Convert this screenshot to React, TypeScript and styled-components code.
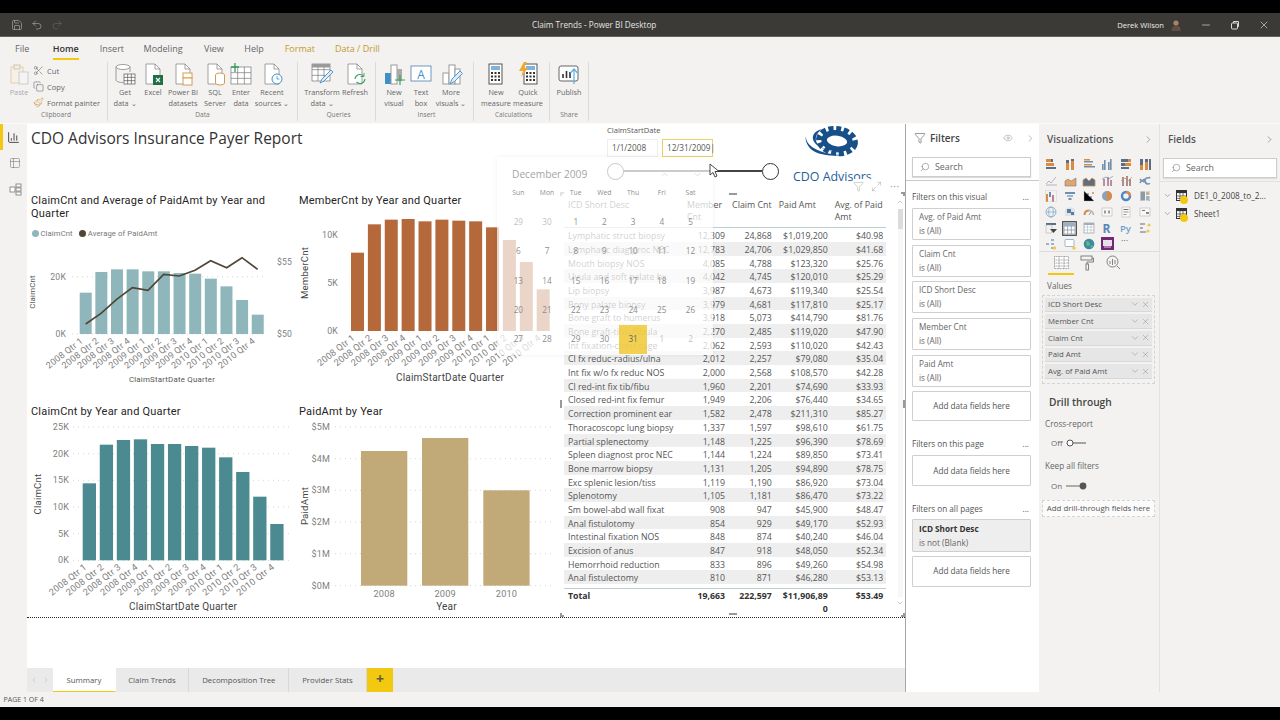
import React from 'react';
import styled, { createGlobalStyle } from 'styled-components';
import {
  BarChart3, ChevronDown, ChevronLeft, ChevronRight, ChevronUp, Copy, Eye, Filter, Maximize2, Minus,
  MoreHorizontal, Paintbrush, Redo2, Save, Scissors, Search, Table2, Undo2, X,
} from 'lucide-react';

const GlobalStyle = createGlobalStyle`
  html, body { margin: 0; padding: 0; background: #000; overflow: hidden; }
  * { box-sizing: border-box; }
`;

const UI = `"Open Sans", "Noto Sans", sans-serif`;
const DIN = `Roboto, "Liberation Sans", sans-serif`;

const Shell = styled.div`
  width: 1280px; height: 720px; background: #000; padding: 13px 0;
  display: flex; flex-direction: column; font-family: ${UI}; color: #444;
`;

/* title bar */
const TitleBar = styled.div`
  height: 24px; background: #3b3a36; border-bottom: 1px solid #62625e; color: #e4e4e4;
  display: flex; align-items: center; font-size: 8.2px;
`;
const QuickTools = styled.div`
  width: 532px; padding-left: 11px; display: flex; gap: 8px; align-items: center; color: #b5b5b3;
`;
const Who = styled.div`
  margin-left: auto; display: flex; align-items: center; color: #eee; font-size: 7.6px;
`;
const WinButtons = styled.div`
  width: 70px; margin-left: 18px; margin-right: 10px; display: flex; justify-content: space-between; color: #ddd;
`;

/* ribbon */
const MenuRow = styled.div`
  height: 23px; background: #f3f2f1; display: flex; padding-left: 15px; font-size: 9px; align-items: flex-start;
`;
const MenuTab = styled.div<{ $x: number; $active?: boolean; $ctx?: boolean }>`
  margin-left: ${p => p.$x}px; height: 23px; padding-top: 5px; line-height: 13px;
  color: ${p => (p.$ctx ? '#c49a2c' : p.$active ? '#333' : '#666')};
  border-bottom: 2px solid ${p => (p.$active ? '#f2c811' : 'transparent')};
  font-weight: ${p => (p.$active ? 600 : 400)};
`;
const Ribbon = styled.div`
  height: 64px; background: #f3f2f1; display: flex; padding: 2px 0; border-bottom: 1px solid #fafafa;
`;
const Group = styled.div<{ $w: number; $pad?: number }>`
  width: ${p => p.$w}px; padding-left: ${p => p.$pad ?? 0}px; flex: none;
  display: flex; flex-direction: column; border-right: 1px solid #dcdbda;
`;
const GroupBody = styled.div`
  flex: 1; display: flex;
`;
const GroupLabel = styled.div`
  height: 11px; line-height: 10px; text-align: center; font-size: 6.6px; color: #777;
`;
const Item = styled.div<{ $w: number; $off?: boolean }>`
  width: ${p => p.$w}px; flex: none; display: flex; flex-direction: column; align-items: center;
  font-size: 7.3px; line-height: 11px; white-space: nowrap; color: ${p => (p.$off ? '#aaa' : '#666')};
  svg { margin-bottom: 1px; display: block; }
`;
const SmallCol = styled.div`
  display: flex; flex-direction: column; gap: 5px; padding-top: 3px;
`;
const SmallItem = styled.div`
  display: flex; align-items: center; gap: 3px; height: 11px; font-size: 7.6px; color: #666; white-space: nowrap;
  svg { flex: none; }
`;

/* main */
const Main = styled.div`
  flex: 1; min-height: 0; display: flex;
`;
const Rail = styled.div`
  width: 27px; flex: none; background: #f3f2f1; display: flex; flex-direction: column; align-items: center; color: #666;
`;
const RailItem = styled.div<{ $on?: boolean }>`
  width: 27px; height: 26px; display: flex; align-items: center; justify-content: center;
  color: ${p => (p.$on ? '#333' : '#777')};
  border-left: 3px solid ${p => (p.$on ? '#f2c811' : 'transparent')};
  padding-right: ${p => (p.$on ? 3 : 0)}px;
`;
const Center = styled.div`
  width: 878px; flex: none; display: flex; flex-direction: column;
`;
const Canvas = styled.div`
  position: relative; height: 544px; background: #fff;
  display: grid; grid-template-columns: 270px 263px 345px; grid-template-rows: 66px 210px 217px 51px;
`;
const ReportTitle = styled.div`
  grid-column: 1 / 3; padding: 4px 0 0 4px; font-size: 15.5px; line-height: 21px; color: #333;
`;
const TopRight = styled.div`
  display: flex; padding-left: 47px; overflow: hidden;
`;
const Slicer = styled.div`
  width: 172px; flex: none; display: flex; flex-direction: column;
`;
const SlicerTitle = styled.div`
  font-size: 7.6px; line-height: 12px; margin-bottom: 3px; color: #555;
`;
const DateRow = styled.div`
  display: flex; gap: 4px;
`;
const DateBox = styled.div<{ $on?: boolean }>`
  width: 51px; height: 18px; line-height: 16px; padding-left: 4px; font-size: 8.2px; color: #555; background: #fff;
  border: 1px solid ${p => (p.$on ? '#ecd165' : '#eee')};
`;
const Slider = styled.div`
  margin-top: 5px; height: 18px; display: flex; align-items: center;
`;
const Handle = styled.div`
  width: 17px; height: 17px; flex: none; border-radius: 50%; background: #fff; border: 1.6px solid #333;
`;
const Track = styled.div`
  flex: 1; height: 2px; background: #444;
`;
const Logo = styled.div`
  margin-left: 14px; width: 80px; display: flex; flex-direction: column;
`;
const LogoText = styled.div`
  font-size: 12.4px; line-height: 12px; color: #1f5f99; white-space: nowrap; margin-top: -2px;
`;
const Visual = styled.div`
  min-width: 0; position: relative;
`;
const VisualTitle = styled.div<{ $h: number; $pt: number; $pl: number }>`
  height: ${p => p.$h}px; padding: ${p => p.$pt}px 0 0 ${p => p.$pl}px; font-family: ${DIN}; font-size: 11px; line-height: 13.5px;
  letter-spacing: 0.2px; color: #252423; white-space: nowrap;
`;
const ChartSvg = styled.svg`
  display: block; overflow: visible; font-family: ${DIN};
`;
const Tick = styled.text<{ $s?: number; $c?: string }>`
  font-size: ${p => p.$s ?? 9}px; fill: ${p => p.$c ?? '#808080'}; letter-spacing: .2px;
`;
const LegendRow = styled.div`
  height: 19px; padding: 8px 0 0 4px; display: flex; align-items: center; gap: 1.5px; font-family: ${DIN}; font-size: 7.7px; line-height: 11px; color: #777; letter-spacing: .1px;
`;
const Dot = styled.span<{ $c: string; $ml: number }>`
  width: 7px; height: 7px; border-radius: 50%; background: ${p => p.$c}; margin-left: ${p => p.$ml}px;
`;

/* table */
const TableCell = styled.div`
  grid-column: 3; grid-row: 2 / 4; position: relative; padding: 8.7px 0 0 4px; display: flex;
`;
const TableBody = styled.div`
  width: 322px; flex: none; display: flex; flex-direction: column; font-size: 8.75px; color: #555;
`;
const Cols = `grid-template-columns: 123px 38px 46.7px 56px 55.6px 2.7px;`;
const HeadRow = styled.div`
  display: grid; ${Cols} height: 29.5px; padding-top: .4px; border-bottom: 1.5px solid #bdcfd0; line-height: 12px; font-size: 8.85px;
`;
const HeadCell = styled.div<{ $pl?: number; $right?: boolean }>`
  padding-left: ${p => p.$pl ?? 0}px; text-align: ${p => (p.$right ? 'right' : 'left')}; white-space: nowrap;
`;
const DataRow = styled.div<{ $alt: boolean }>`
  display: grid; ${Cols} height: 13.69px; line-height: 16px; background: ${p => (p.$alt ? '#eeeeee' : '#fff')};
`;
const NameCell = styled.div`
  padding-left: 4px; white-space: nowrap;
`;
const Num = styled.div`
  text-align: right; white-space: nowrap;
`;
const TotalRow = styled.div`
  margin-top: 3.5px; border-top: 1px solid #bdcfd0; display: grid; ${Cols} line-height: 13px; padding-top: 1px;
  font-weight: 700; color: #333;
`;
const ScrollCol = styled.div`
  width: 8px; margin: -1px 0 10px 10px; display: flex; flex-direction: column; align-items: center; color: #777;
`;
const Thumb = styled.div`
  width: 5px; height: 20px; margin-top: 3px; background: #dcdcdc;
`;
const ScrollRest = styled.div`
  flex: 1; width: 5px; background: #f7f7f7; margin-bottom: 2px;
`;
const VisualIcons = styled.div`
  position: absolute; right: 2px; top: -11px; display: flex; gap: 7px; width: 50px; height: 14px; align-items: center;
  color: #999; background: #fff;
`;
const Grip = styled.span<{ $l?: number; $r?: number; $t?: number; $b?: number; $w: number; $h: number }>`
  position: absolute; background: #999;
  ${p => (p.$l !== undefined ? `left:${p.$l}px;` : '')} ${p => (p.$r !== undefined ? `right:${p.$r}px;` : '')}
  ${p => (p.$t !== undefined ? `top:${p.$t}px;` : '')} ${p => (p.$b !== undefined ? `bottom:${p.$b}px;` : '')}
  width: ${p => p.$w}px; height: ${p => p.$h}px;
`;
const BottomLine = styled.div`
  grid-column: 1 / 4; border-top: 1px dotted #222;
`;

/* calendar flyout */
const Calendar = styled.div`
  position: absolute; left: 470px; top: 33px; width: 216px; height: 198px; z-index: 5;
  background: rgba(255, 255, 255, 0.72); box-shadow: 0 0 5px rgba(0, 0, 0, 0.06);
  padding: 10px 7px 0 7px; color: #999;
`;
const CalHead = styled.div`
  display: flex; align-items: center; height: 14px; padding-left: 8px; font-size: 10.2px; color: #a5a5a5;
`;
const CalNav = styled.div`
  margin-left: auto; width: 44px; margin-right: 3px; display: flex; justify-content: space-between; color: #bbb;
`;
const CalGrid = styled.div`
  display: grid; grid-template-columns: repeat(7, 28.7px); margin-top: 7px; text-align: center;
`;
const CalDow = styled.div`
  font-size: 6.8px; height: 20px; line-height: 10px; color: #8f8f8f;
`;
const CalDay = styled.div<{ $dim?: boolean; $sel?: boolean }>`
  height: 29.3px; line-height: 28px; font-size: 8.2px;
  color: ${p => (p.$dim ? '#c2c2c2' : p.$sel ? '#666' : '#8d8d8d')};
  background: ${p => (p.$sel ? 'rgba(240, 200, 50, 0.85)' : 'transparent')};
`;
const Pointer = styled.svg`
  position: absolute; left: 682px; top: 39px; z-index: 6;
`;

/* page tabs */
const TabBar = styled.div`
  height: 24px; display: flex; background: #eaeaea;
`;
const TabNav = styled.div`
  width: 26.3px; display: flex; align-items: center; justify-content: space-around; color: #bbb; padding: 0 1px;
`;
const PageTab = styled.div<{ $w: number; $on?: boolean }>`
  width: ${p => p.$w}px; text-align: center; font-size: 7.8px; line-height: 24px; color: #555;
  background: ${p => (p.$on ? '#fff' : 'transparent')};
  border-right: 1px solid ${p => (p.$on ? 'transparent' : '#d8d8d8')};
  border-bottom: 1.5px solid ${p => (p.$on ? '#f2c811' : 'transparent')};
`;
const AddTab = styled.div`
  width: 26.6px; background: #f2c811; color: #5c5c3c; text-align: center; font-size: 14px; font-weight: 700; line-height: 22px;
`;
const StatusBar = styled.div`
  height: 15px; background: #f3f2f1; font-size: 7px; line-height: 16px; padding-left: 3.5px; color: #555;
`;

/* panes */
const FiltersPane = styled.div`
  width: 134px; flex: none; background: #fff; border-left: 1px solid #a8a8a8; display: flex; flex-direction: column; padding: 0 8px 0 6px;
`;
const FilterHead = styled.div`
  height: 28px; display: flex; align-items: center; font-size: 10px; font-weight: 600; color: #444; gap: 4px; padding-left: 2px;
`;
const HeadEnd = styled.div`
  margin-left: auto; display: flex; align-items: center; gap: 12px; margin-right: -5px; color: #888;
`;
const SearchBox = styled.div<{ $w: number }>`
  width: ${p => p.$w}px; height: 20px; margin-top: 5px; background: #fff; border: 1px solid #ccc; box-shadow: 0 1px 1px #ddd;
  display: flex; align-items: center; gap: 5px; padding-left: 7px; font-size: 8.8px; color: #666;
`;
const PaneLine = styled.div`
  height: 1px; background: #c9c9c9; margin: 3px -8px 0 -6px;
`;
const SectionHead = styled.div<{ $mt: number }>`
  display: flex; justify-content: space-between; height: 12px; line-height: 12px; margin-top: ${p => p.$mt}px;
  font-size: 8.2px; color: #555; padding-right: 2px;
`;
const FilterCard = styled.div<{ $fill?: boolean; $h?: number; $mt?: number }>`
  height: ${p => p.$h ?? 32}px; margin-top: ${p => p.$mt ?? 4.7}px; border: 1px solid #cfcfcf; border-radius: 1px;
  background: ${p => (p.$fill ? '#eeeeee' : '#fff')}; padding-left: 6px; font-size: 8.2px; line-height: 14px; color: #666;
  display: flex; flex-direction: column; justify-content: center;
  b { color: #333; font-weight: 700; }
`;
const AddCard = styled(FilterCard)`
  align-items: center; padding-left: 0; color: #555;
`;
const VizPane = styled.div`
  width: 120px; flex: none; background: #f3f2f1; display: flex; flex-direction: column;
`;
const PaneHead = styled.div<{ $pl: number }>`
  height: 29px; display: flex; align-items: center; justify-content: space-between; padding: 1px 5px 0 ${p => p.$pl}px;
  font-size: 10px; font-weight: 600; color: #555;
  svg { color: #666; }
`;
const VizGrid = styled.div`
  margin-top: 3px; padding: 0 3px; height: 96px; display: grid; grid-template-columns: repeat(6, 18.67px); grid-auto-rows: 16px;
  justify-items: center; align-items: center; border-bottom: 1px solid #dcdcdc;
`;
const VizTabs = styled.div`
  height: 24px; padding-left: 9px; display: flex;
`;
const VizTab = styled.div<{ $on?: boolean }>`
  width: 26px; height: 23px; display: flex; align-items: center; justify-content: center;
  border-bottom: 2px solid ${p => (p.$on ? '#f2c811' : 'transparent')};
`;
const FieldLabel = styled.div<{ $mt?: number; $pl?: number }>`
  margin-top: ${p => p.$mt ?? 4}px; padding-left: ${p => p.$pl ?? 6}px; font-size: 8.2px; line-height: 12px; color: #666;
`;
const WellBox = styled.div`
  margin: 3px 4px 0 3px; height: 89px; border: 1px dashed #d4d4d4; padding: 1.5px 2px; display: flex; flex-direction: column; gap: 2px;
`;
const Pill = styled.div`
  height: 14.7px; background: #e6e6e6; border-bottom: 1px solid #d8d8d8; padding: 0 2px 0 3px; display: flex; align-items: center; font-size: 7.8px; color: #555;
  span { flex: 1; }
  svg { color: #777; margin-left: 1px; }
`;
const DrillTitle = styled.div`
  margin-top: 12px; padding-left: 10px; font-size: 10.2px; font-weight: 600; line-height: 13px; color: #444;
`;
const ToggleRow = styled.div<{ $mt?: number }>`
  display: flex; align-items: center; margin-top: ${p => p.$mt ?? 7}px; padding-left: 12px; font-size: 8px; line-height: 12px; color: #666; gap: 3px;
`;
const DrillBox = styled.div`
  margin: 8px 4px 0 3px; height: 17px; border: 1px dashed #d4d4d4; background: #fbfbfb; text-align: center;
  font-size: 7.9px; line-height: 15px; color: #555; white-space: nowrap;
`;
const FieldsPane = styled.div`
  flex: 1; min-width: 0; background: #f3f2f1; border-left: 1px solid #e2e2e2; display: flex; flex-direction: column;
`;
const FieldsTop = styled.div`
  padding: 0 3px 3px 3px; border-bottom: 1px solid #e0e0e0;
`;
const TreeRow = styled.div<{ $mt: number }>`
  display: flex; align-items: center; margin-top: ${p => p.$mt}px; padding-left: 3px; height: 12px; font-size: 8.2px; color: #444; white-space: nowrap;
  position: relative;
`;
const Badge = styled.span`
  position: absolute; left: 20px; top: 7px; width: 8px; height: 8px; border-radius: 50%; background: #f2c811; z-index: 1;
`;

/* ---- small drawings ---- */
const Page: React.FC<{ children?: React.ReactNode }> = ({ children }) => (
  <svg width="24" height="24" viewBox="0 0 24 24" fill="none">
    <path d="M5 2h9l5 5v15H5z" fill="#fff" stroke="#8a8a8a" strokeWidth=".8" />
    <path d="M14 2v5h5" stroke="#8a8a8a" strokeWidth=".8" />
    {children}
  </svg>
);
const Ic: React.FC<{ children?: React.ReactNode }> = ({ children }) => (
  <svg width="24" height="24" viewBox="0 0 24 24" fill="none">{children}</svg>
);
const GridLines = ({ x, y, w, h, c = '#777' }: { x: number; y: number; w: number; h: number; c?: string }) => (
  <g stroke={c} strokeWidth=".7">
    <rect x={x} y={y} width={w} height={h} fill="#fff" />
    <path d={`M${x} ${y + h / 3}h${w}M${x} ${y + (2 * h) / 3}h${w}M${x + w / 3} ${y}v${h}M${x + (2 * w) / 3} ${y}v${h}`} />
  </g>
);
const Calc = ({ x }: { x: number }) => (
  <g>
    <rect x={x} y="2" width="13" height="20" fill="#fff" stroke="#444" strokeWidth=".9" />
    <rect x={x + 2} y="4" width="9" height="4" fill="#7fb3dd" />
    {[10, 13.5, 17].map(y => [2, 5.5, 9].map(dx => <rect key={`${y}${dx}`} x={x + dx} y={y} width="2" height="2" fill="#333" />))}
  </g>
);
const R = (x: number, y: number, w: number, h: number, c: string) => <rect x={x} y={y} width={w} height={h} fill={c} />;
const B = '#6f8fae';
const O = '#d98b43';
const D = '#5a6f86';
const bars = (xs: number[], tops: number[], w: number, c: string) => xs.map((x, i) => <rect key={i} x={x} y={tops[i]} width={w} height={12 - tops[i]} fill={c} />);
const vizIcons: React.ReactNode[] = [
  <>{R(1, 1, 5, 3, O)}{R(6, 1, 2, 3, D)}{R(1, 5, 8, 3, O)}{R(1, 9, 10, 2, D)}</>,
  <>{R(2, 5, 3, 7, O)}{R(2, 2, 3, 3, D)}{R(7, 3, 3, 9, O)}{R(7, 1, 3, 2, D)}</>,
  <>{R(1, 1, 6, 1.5, O)}{R(1, 3, 9, 1.5, B)}{R(1, 6, 8, 1.5, O)}{R(1, 8, 11, 1.5, B)}</>,
  <>{bars([1, 3, 7, 9], [6, 2, 4, 1], 1.6, B)}</>,
  <>{R(1, 1, 7, 3, D)}{R(8, 1, 3, 3, O)}{R(1, 5, 4, 3, D)}{R(5, 5, 6, 3, O)}{R(1, 9, 8, 2, D)}</>,
  <>{R(1, 1, 3, 6, D)}{R(1, 7, 3, 5, O)}{R(6, 1, 3, 3, D)}{R(6, 4, 3, 8, O)}{R(10, 1, 2, 11, D)}</>,
  <path d="M1 10l3-3 2 2 5-6M1 11h11" stroke="#9aa5b1" strokeWidth=".8" fill="none" />,
  <path d="M1 12V7l3-2 3 2 5-3v8z" fill="#e2a56c" stroke={D} strokeWidth=".5" />,
  <path d="M0 12V6l3-2 3 3 3-3 3 2v6z" fill={D} stroke={O} strokeWidth=".8" />,
  <>{bars([2, 6, 9], [5, 3, 6], 2, '#b98fa0')}<path d="M1 5l4-2 3 2 4-3" stroke={B} strokeWidth=".7" fill="none" /></>,
  <>{bars([2, 6, 9], [3, 2, 5], 2, '#a88f8f')}<path d="M1 7l4-3 3 3 4-4" stroke={O} strokeWidth=".7" fill="none" /></>,
  <path d="M1 9c3-6 3 2 5-3s3 0 5-3M1 5c3 5 4-3 5 2s4 2 5 3" stroke={B} strokeWidth="1.5" fill="none" />,
  <>{R(1, 4, 2, 8, O)}{R(4, 2, 2, 5, B)}{R(7, 5, 2, 7, '#c07ea0')}<rect x=".5" y=".5" width="11" height="11" stroke="#ccc" strokeWidth=".4" fill="none" /></>,
  <>{R(1, 2, 10, 2, B)}{R(3, 5, 6, 2, '#9fb4ca')}{R(4.5, 8, 3, 2, B)}</>,
  <><circle cx="3" cy="9" r="1" fill={O} /><circle cx="5" cy="4" r="1" fill={B} /><circle cx="8" cy="7" r="1" fill={B} /><circle cx="10" cy="3" r="1" fill={O} /><path d="M1 1v10h10" stroke="#bbb" strokeWidth=".4" /></>,
  <><circle cx="6" cy="6" r="5" fill="#8aa2bb" /><path d="M6 6V1a5 5 0 0 1 0 10z" fill={O} /></>,
  <><circle cx="6" cy="6" r="4" fill="none" stroke="#4c86c6" strokeWidth="2.4" /><path d="M6 2a4 4 0 0 1 4 4" stroke={O} strokeWidth="2.4" fill="none" /></>,
  <>{R(1, 1, 5, 10, '#8d9aa8')}{R(7, 1, 4, 4, '#c9b38f')}{R(7, 6, 4, 5, '#9fb0c0')}<rect x="1.5" y="1.5" width="9" height="9" fill="none" stroke="#fff" strokeWidth=".4" /></>,
  <><circle cx="6" cy="6" r="5" fill="#eaf2f7" stroke="#7b98b3" strokeWidth=".7" /><ellipse cx="6" cy="6" rx="2.3" ry="5" fill="none" stroke="#7b98b3" strokeWidth=".6" /><path d="M1 6h10" stroke="#7b98b3" strokeWidth=".6" /></>,
  <><path d="M1 3l5-2 5 2v7H1z" fill="#dde5ec" /><path d="M3 3h4v4H3zM7 6h3v3H7z" fill="#5f7c99" /></>,
  <><path d="M1.5 9a4.5 4.5 0 0 1 9 0" stroke="#b9b9b9" strokeWidth="1.8" fill="none" /><path d="M1.5 9a4.5 4.5 0 0 1 4-4.5" stroke={O} strokeWidth="1.8" fill="none" /><path d="M6 9l2-3" stroke="#555" strokeWidth=".6" /></>,
  <><rect x="1" y="2" width="10" height="8" fill="#f8f8f8" stroke="#aaa" strokeWidth=".5" />{R(3, 4.5, 2, 3, '#999')}{R(7, 4.5, 2, 3, '#999')}</>,
  <><rect x="2" y="1" width="8" height="10" fill="#f8f8f8" stroke="#aaa" strokeWidth=".5" />{R(3.5, 3, 5, 1, '#777')}{R(3.5, 5.5, 5, 1, '#999')}{R(3.5, 8, 3, 1, '#999')}</>,
  <><rect x="1" y="2" width="10" height="8" fill="#f8f8f8" stroke="#aaa" strokeWidth=".5" />{R(3, 4, 3, 1, '#777')}{R(7, 6, 3, 2, '#888')}</>,
  <><path d="M1 1h10v2H1z" fill={D} /><path d="M1 3h6v8H1z" fill="none" stroke="#9aa" strokeWidth=".5" /><path d="M5 7h7l-3.5 4z" fill="#444" /></>,
  null,
  <><rect x="1" y="1" width="10" height="10" fill="#fff" stroke="#777" strokeWidth=".5" />{R(1, 1, 10, 2, '#9bb0c3')}<path d="M4.5 1v10M8 1v10M1 5h10M1 8h10" stroke="#9bb0c3" strokeWidth=".5" /></>,
  <text x="1.5" y="11" fontSize="12" fontWeight="700" fill="#5b86b5" fontFamily="Open Sans, sans-serif">R</text>,
  <text x="0" y="10" fontSize="9.5" fontWeight="600" fill="#6d9fd0" fontFamily="Open Sans, sans-serif">Py</text>,
  <><path d="M1 2h5M1 6h3M1 10h6" stroke="#667" strokeWidth="1.2" /><circle cx="10" cy="3" r="1.6" fill="#f0c850" /><circle cx="9" cy="9" r="1.6" fill="#f0c850" /></>,
  <><path d="M1 6h3M6 2h3M6 6h3M6 10h3" stroke="#4477aa" strokeWidth="1.2" /><circle cx="9.5" cy="10" r="1.8" fill="#f0c850" /></>,
  <><rect x="1" y="1.5" width="9" height="7" rx="1" fill="#fff" stroke="#7f9ab5" strokeWidth=".7" /><circle cx="10" cy="10" r="1.7" fill="#f0c850" /></>,
  <><circle cx="6" cy="6" r="5.3" fill="#3d8aa8" /><path d="M3 3l3 1 1 3-3 1zM7 8l3-1-1 3z" fill="#6dbb6d" /></>,
  <><rect x="0" y="-1" width="13" height="13" fill="#742774" /><rect x="2" y="2" width="9" height="6" fill="#fff" opacity=".85" /><path d="M3 9h7" stroke="#fff" strokeWidth=".8" /></>,
  <text x="1" y="6" fontSize="9" fill="#666" fontFamily="Open Sans, sans-serif">···</text>,
];

const quarters = ['2008 Qtr 1', '2008 Qtr 2', '2008 Qtr 3', '2008 Qtr 4', '2009 Qtr 1', '2009 Qtr 2', '2009 Qtr 3', '2009 Qtr 4', '2010 Qtr 1', '2010 Qtr 2', '2010 Qtr 3', '2010 Qtr 4'];

type ChartProps = {
  vx: number; vy: number; vw: number; vh: number;
  base: number; barX: number; step: number; barW: number; tops: number[]; color: string;
  ticks: [string, number][]; tickX: number; gridFrom: number; gridTo: number; tickSize?: number;
  axisY: [string, number, number, number]; axisX: [string, number, number, number]; labelSize?: number; axisColor?: string;
  children?: React.ReactNode;
};

const QuarterChart: React.FC<ChartProps> = ({ vx, vy, vw, vh, base, barX, step, barW, tops, color, ticks, tickX, gridFrom, gridTo, tickSize = 9, axisY, axisX, labelSize = 9.4, axisColor = '#444', children }) => (
  <ChartSvg width={vw} height={vh} viewBox={`${vx} ${vy} ${vw} ${vh}`}>
    {ticks.map(([t, y]) => (
      <g key={t}>
        <line x1={gridFrom} x2={gridTo} y1={y} y2={y} stroke="#d5d5d5" strokeDasharray="1 4" />
        <Tick x={tickX} y={y + 3} textAnchor="end" $s={tickSize}>{t}</Tick>
      </g>
    ))}
    {tops.map((top, i) => <rect key={i} x={barX + i * step} y={top} width={barW} height={base - top} fill={color} />)}
    {quarters.map((q, i) => {
      const x = barX + i * step + barW / 2 - 2;
      const y = base + 8;
      return <Tick key={q} x={x} y={y} textAnchor="end" $s={labelSize} transform={`rotate(-38 ${x} ${y})`}>{q}</Tick>;
    })}
    <Tick x={axisY[1]} y={axisY[2]} $s={axisY[3]} $c={axisColor} textAnchor="middle" transform={`rotate(-90 ${axisY[1]} ${axisY[2]})`}>{axisY[0]}</Tick>
    <Tick x={axisX[1]} y={axisX[2]} $s={axisX[3]} $c={axisColor} textAnchor="middle">{axisX[0]}</Tick>
    {children}
  </ChartSvg>
);

const rowsData: [string, string, string, string, string][] = [
  ['Lymphatic struct biopsy', '12,309', '24,868', '1,019,200', '40.98'],
  ['Lymphatic diag proc NEC', '12,783', '24,706', '1,029,850', '41.68'],
  ['Mouth biopsy NOS', '4,085', '4,788', '123,320', '25.76'],
  ['Uvula and soft palate bx', '4,042', '4,745', '120,010', '25.29'],
  ['Lip biopsy', '3,987', '4,673', '119,340', '25.54'],
  ['Bony palate biopsy', '3,979', '4,681', '117,810', '25.17'],
  ['Bone graft to humerus', '3,918', '5,073', '414,790', '81.76'],
  ['Bone graft-tibia/fibula', '2,270', '2,485', '119,020', '47.90'],
  ['Int fixation-chest cage', '2,062', '2,593', '110,020', '42.43'],
  ['Cl fx reduc-radius/ulna', '2,012', '2,257', '79,080', '35.04'],
  ['Int fix w/o fx reduc NOS', '2,000', '2,568', '108,570', '42.28'],
  ['Cl red-int fix tib/fibu', '1,960', '2,201', '74,690', '33.93'],
  ['Closed red-int fix femur', '1,949', '2,206', '76,440', '34.65'],
  ['Correction prominent ear', '1,582', '2,478', '211,310', '85.27'],
  ['Thoracoscopc lung biopsy', '1,337', '1,597', '98,610', '61.75'],
  ['Partial splenectomy', '1,148', '1,225', '96,390', '78.69'],
  ['Spleen diagnost proc NEC', '1,144', '1,224', '89,850', '73.41'],
  ['Bone marrow biopsy', '1,131', '1,205', '94,890', '78.75'],
  ['Exc splenic lesion/tiss', '1,119', '1,190', '86,920', '73.04'],
  ['Splenotomy', '1,105', '1,181', '86,470', '73.22'],
  ['Sm bowel-abd wall fixat', '908', '947', '45,900', '48.47'],
  ['Anal fistulotomy', '854', '929', '49,170', '52.93'],
  ['Intestinal fixation NOS', '848', '874', '40,240', '46.04'],
  ['Excision of anus', '847', '918', '48,050', '52.34'],
  ['Hemorrhoid reduction', '833', '896', '49,260', '54.98'],
  ['Anal fistulectomy', '810', '871', '46,280', '53.13'],
];

const calDays = [29, 30, 1, 2, 3, 4, 5, 6, 7, 8, 9, 10, 11, 12, 13, 14, 15, 16, 17, 18, 19, 20, 21, 22, 23, 24, 25, 26, 27, 28, 29, 30, 31, 1, 2];
const linePts = [[257, 432], [303, 400], [350, 358], [397, 323], [444, 331], [491, 283], [538, 288], [585, 271], [632, 242], [680, 263], [726, 233], [773, 268]];
const z1 = (t: number) => 180 + t / 3;
const z2 = (t: number) => 190 + t / 3;
const z3 = (t: number) => 400 + t / 3;

const filterCards = ['Avg. of Paid Amt', 'Claim Cnt', 'ICD Short Desc', 'Member Cnt', 'Paid Amt'];
const wells = ['ICD Short Desc', 'Member Cnt', 'Claim Cnt', 'Paid Amt', 'Avg. of Paid Amt'];

const TableGlyph = () => (
  <svg width="11" height="11" viewBox="0 0 11 11"><rect x=".5" y=".5" width="10" height="10" fill="#fff" stroke="#333" /><rect x=".5" y=".5" width="10" height="2.6" fill="#333" /><path d="M.5 6h10M.5 8.4h10M4 3v8M7 3v8" stroke="#333" strokeWidth=".7" /></svg>
);

const App: React.FC = () => (
  <Shell>
    <GlobalStyle />
    <TitleBar>
      <QuickTools>
        <Save size={12} strokeWidth={1.2} />
        <Undo2 size={12} strokeWidth={1.2} />
        <Redo2 size={12} strokeWidth={1.2} color="#6b6b68" />
      </QuickTools>
      <div>Claim Trends - Power BI Desktop</div>
      <Who>
        Derek Wilson
        <svg width="12" height="12" viewBox="0 0 12 12" style={{ marginLeft: 6 }}>
          <circle cx="6" cy="4" r="2.6" fill="#a8836c" /><path d="M1.5 12c0-4 2-5 4.5-5s4.5 1 4.5 5z" fill="#5b4f48" /><path d="M8 7l2 2-1 2z" fill="#b14a2e" />
        </svg>
        <WinButtons>
          <Minus size={12} strokeWidth={1.3} />
          <svg width="12" height="12" viewBox="0 0 12 12" fill="none" stroke="currentColor"><rect x="2.5" y="4" width="6" height="6" rx="1" /><path d="M4.5 4V2.5h5v5H8.5" /></svg>
          <X size={12} strokeWidth={1.3} />
        </WinButtons>
      </Who>
    </TitleBar>

    <MenuRow>
      <MenuTab $x={0}>File</MenuTab>
      <MenuTab $x={23.5} $active>Home</MenuTab>
      <MenuTab $x={21}>Insert</MenuTab>
      <MenuTab $x={19.5}>Modeling</MenuTab>
      <MenuTab $x={21.5}>View</MenuTab>
      <MenuTab $x={20.5}>Help</MenuTab>
      <MenuTab $x={21} $ctx>Format</MenuTab>
      <MenuTab $x={20} $ctx>Data / Drill</MenuTab>
    </MenuRow>

    <Ribbon>
      <Group $w={108} $pad={5}>
        <GroupBody>
          <Item $w={28} $off>
            <svg width="24" height="24" viewBox="0 0 24 24" fill="none"><rect x="4" y="5" width="12" height="16" fill="#f6f0e6" stroke="#e3cfa9" /><rect x="7" y="3" width="6" height="4" fill="#eee" stroke="#d6c6a6" /><rect x="12" y="10" width="9" height="12" fill="#f4f4f4" stroke="#ccc" /></svg>
            Paste
          </Item>
          <SmallCol>
            <SmallItem><Scissors size={11} strokeWidth={1.1} color="#555" />Cut</SmallItem>
            <SmallItem><Copy size={11} strokeWidth={1.1} color="#555" />Copy</SmallItem>
            <SmallItem><Paintbrush size={11} strokeWidth={1.2} color="#c9892f" />Format painter</SmallItem>
          </SmallCol>
        </GroupBody>
        <GroupLabel>Clipboard</GroupLabel>
      </Group>

      <Group $w={190}>
        <GroupBody>
          <Item $w={34}><Ic><ellipse cx="10" cy="5" rx="7" ry="2.5" fill="#fff" stroke="#888" strokeWidth=".8" /><path d="M3 5v13c0 1.4 3 2.5 7 2.5M17 5v5" stroke="#888" strokeWidth=".8" /><GridLines x={11} y={12} w={11} h={10} c="#555" /></Ic><span>Get</span><span>data ⌄</span></Item>
          <Item $w={22}><Page><rect x="12" y="13" width="10" height="10" fill="#1e7145" /><path d="M15 16l4 4M19 16l-4 4" stroke="#fff" strokeWidth="1.1" /></Page><span>Excel</span></Item>
          <Item $w={38}><Page><rect x="12" y="11" width="9" height="5" fill="#fff" stroke="#d69a4c" /><rect x="12" y="16" width="9" height="7" fill="#fff" stroke="#d69a4c" /></Page><span>Power BI</span><span>datasets</span></Item>
          <Item $w={26}><Page><ellipse cx="17" cy="13" rx="4.5" ry="2" fill="#fff" stroke="#d69a4c" /><path d="M12.5 13v8c0 1 2 2 4.5 2s4.5-1 4.5-2v-8" fill="#fff" stroke="#d69a4c" /></Page><span>SQL</span><span>Server</span></Item>
          <Item $w={26}><Ic><GridLines x={2} y={5} w={20} h={17} /><path d="M6 1v9M2 5h8" stroke="#2f9e5a" strokeWidth="1.3" /></Ic><span>Enter</span><span>data</span></Item>
          <Item $w={36}><Page><circle cx="17" cy="17" r="5" fill="#fff" stroke="#3f8fc9" /><path d="M17 14v3h2.5" stroke="#3f8fc9" strokeWidth=".8" /></Page><span>Recent</span><span>sources ⌄</span></Item>
        </GroupBody>
        <GroupLabel>Data</GroupLabel>
      </Group>

      <Group $w={78} $pad={4}>
        <GroupBody>
          <Item $w={40}><Ic><GridLines x={2} y={2} w={18} h={17} /><rect x="2" y="2" width="18" height="3.5" fill="#9a9a9a" /><path d="M10 21l2-4 9-9 2 2-9 9z" fill="#dcecf8" stroke="#3f8fc9" strokeWidth=".9" /></Ic><span>Transform</span><span>data ⌄</span></Item>
          <Item $w={26}><Page><path d="M12 17a5 5 0 0 1 8.5-3M22 17a5 5 0 0 1-8.5 3" stroke="#3aa35e" strokeWidth="1.1" /><path d="M21 11v3.5h-3.5" stroke="#3aa35e" strokeWidth=".9" /></Page><span>Refresh</span></Item>
        </GroupBody>
        <GroupLabel>Queries</GroupLabel>
      </Group>

      <Group $w={98} $pad={4}>
        <GroupBody>
          <Item $w={28}><Ic><rect x="3" y="11" width="6" height="11" fill="#3f8fc9" /><rect x="9" y="3" width="6" height="19" fill="#fff" stroke="#9a9a9a" /><rect x="15" y="7" width="5" height="12" fill="#aaa" /><path d="M18 13v10M13 18h10" stroke="#3aa35e" strokeWidth="1.2" /></Ic><span>New</span><span>visual</span></Item>
          <Item $w={26}><Ic><rect x="2" y="4" width="20" height="15" fill="#fff" stroke="#4f7fa8" strokeWidth=".8" /><text x="12" y="16.5" textAnchor="middle" fontSize="12" fill="#3f8fc9" fontFamily="Open Sans, sans-serif">A</text></Ic><span>Text</span><span>box</span></Item>
          <Item $w={34}><Ic><rect x="4" y="11" width="6" height="11" fill="#fff" stroke="#999" /><rect x="10" y="3" width="6" height="19" fill="#fff" stroke="#999" /><rect x="16" y="7" width="5" height="15" fill="#fff" stroke="#999" /><path d="M11 22l2-5 8-8 2.5 2.5-8 8z" fill="#dcecf8" stroke="#3f8fc9" strokeWidth=".9" /></Ic><span>More</span><span>visuals ⌄</span></Item>
        </GroupBody>
        <GroupLabel>Insert</GroupLabel>
      </Group>

      <Group $w={76} $pad={4}>
        <GroupBody>
          <Item $w={36}><Ic><Calc x={5} /></Ic><span>New</span><span>measure</span></Item>
          <Item $w={28}><Ic><Calc x={8} /><path d="M8 0L3 9h4l-2 6 7-9H8l3-6z" fill="#f0a830" /></Ic><span>Quick</span><span>measure</span></Item>
        </GroupBody>
        <GroupLabel>Calculations</GroupLabel>
      </Group>

      <Group $w={39}>
        <GroupBody>
          <Item $w={38}><Ic><rect x="2" y="4" width="19" height="15" rx="2" fill="#fff" stroke="#555" strokeWidth=".9" /><path d="M6 16v-4M9.5 16V9M13 16v-6" stroke="#333" strokeWidth="1.6" /><path d="M17 22V8M13.5 11L17 7l3.5 4" stroke="#5aaee0" strokeWidth="1.2" /></Ic><span>Publish</span></Item>
        </GroupBody>
        <GroupLabel>Share</GroupLabel>
      </Group>
    </Ribbon>

    <Main>
      <Rail>
        <RailItem $on><BarChart3 size={13} strokeWidth={1.6} /></RailItem>
        <RailItem><Table2 size={12} strokeWidth={1.1} /></RailItem>
        <RailItem>
          <svg width="13" height="13" viewBox="0 0 13 13" fill="#fff" stroke="#777" strokeWidth=".8"><rect x="1" y="4" width="5" height="5" /><rect x="7" y="1" width="5" height="3" /><rect x="7" y="5" width="5" height="3" /><rect x="7" y="9" width="5" height="3" /></svg>
        </RailItem>
      </Rail>

      <Center>
        <Canvas>
          <ReportTitle>CDO Advisors Insurance Payer Report</ReportTitle>
          <TopRight>
            <Slicer>
              <SlicerTitle>ClaimStartDate</SlicerTitle>
              <DateRow>
                <DateBox>1/1/2008</DateBox>
                <DateBox $on>12/31/2009|</DateBox>
              </DateRow>
              <Slider><Handle /><Track /><Handle /></Slider>
            </Slicer>
            <Logo>
              <svg width="80" height="49" viewBox="793 130 80 49" fill="none">
                <ellipse cx="837" cy="147" rx="18" ry="12" stroke="#174f88" strokeWidth="6" strokeDasharray="5 2.6" transform="rotate(8 837 147)" />
                <ellipse cx="837" cy="147" rx="13" ry="8" stroke="#174f88" strokeWidth="5.5" transform="rotate(8 837 147)" />
                <path d="M822 135C810 138 809 149 824 155c7 3 14 4 20 3-10 1-26-3-28-11-1-5 2-9 6-12z" fill="#174f88" />
                <path d="M806 142c-1 9 12 18 36 19-13 2-28-1-33-8-3-4-4-8-3-11z" fill="#174f88" />
              </svg>
              <LogoText>CDO Advisors</LogoText>
            </Logo>
          </TopRight>

          <Visual>
            <VisualTitle $h={30} $pt={3.5} $pl={4}>ClaimCnt and Average of PaidAmt by Year and<br />Quarter</VisualTitle>
            <LegendRow><Dot $c="#8fb7bb" $ml={1} />ClaimCnt<Dot $c="#4f4636" $ml={5} />Average of PaidAmt</LegendRow>
            <QuarterChart
              vx={27} vy={239} vw={270} vh={161}
              base={334} barX={79.7} step={15.64} barW={12}
              tops={[338, 276, 268, 268, 274, 274, 279, 281, 296, 319, 360, 404].map(z1)} color="#8fb7bb"
              ticks={[['20K', 276.7], ['0K', 334]]} tickX={66} gridFrom={72} gridTo={264} tickSize={8.6}
              axisY={['ClaimCnt', 35, 292, 7.8]} axisX={['ClaimStartDate Quarter', 172, 382, 7.9]} labelSize={9} axisColor="#555"
            >
              <polyline points={linePts.map(([x, y]) => `${x / 3},${z1(y)}`).join(' ')} fill="none" stroke="#4f4636" strokeWidth="1.7" />
              <Tick x={277} y={265} $s={8.6}>$55</Tick>
              <Tick x={277} y={337} $s={8.6}>$50</Tick>
            </QuarterChart>
          </Visual>

          <Visual>
            <VisualTitle $h={17} $pt={3.5} $pl={2}>MemberCnt by Year and Quarter</VisualTitle>
            <QuarterChart
              vx={297} vy={207} vw={263} vh={193}
              base={331} barX={351} step={16.88} barW={13}
              tops={[188, 103, 89, 87, 94, 89, 92, 94, 112, 150, 216, 298].map(z2)} color="#b5683a"
              ticks={[['10K', 235], ['5K', 283], ['0K', 331]]} tickX={338} gridFrom={343} gridTo={343} tickSize={8.8}
              axisY={['MemberCnt', 308, 273, 9.6]} axisX={['ClaimStartDate Quarter', 450, 381, 10]} labelSize={9.2}
            />
          </Visual>

          <TableCell>
            <VisualIcons>
              <Filter size={11} strokeWidth={1} />
              <Maximize2 size={11} strokeWidth={1} />
              <MoreHorizontal size={11} strokeWidth={1} />
            </VisualIcons>
            <Grip $l={0} $t={2} $w={4} $h={2} />
            <Grip $l={0} $t={2} $w={2} $h={4} />
            <Grip $r={0} $t={2} $w={4} $h={2} />
            <Grip $r={0} $t={2} $w={2} $h={4} />
            <Grip $l={169} $t={3} $w={8} $h={2} />
            <Grip $l={0} $b={0} $w={4} $h={2} />
            <Grip $r={0} $b={0} $w={4} $h={2} />
            <Grip $l={0} $b={0} $w={2} $h={4} />
            <Grip $r={0} $b={0} $w={2} $h={4} />
            <Grip $l={169} $b={2} $w={8} $h={2} />
            <Grip $l={0} $t={210} $w={2} $h={8} />
            <Grip $r={0} $t={210} $w={2} $h={8} />
            <TableBody>
              <HeadRow>
                <HeadCell $pl={4}>ICD Short Desc</HeadCell>
                <HeadCell>Member<br />Cnt</HeadCell>
                <HeadCell $right>Claim Cnt</HeadCell>
                <HeadCell $pl={7}>Paid Amt</HeadCell>
                <HeadCell $pl={7}>Avg. of Paid<br />Amt</HeadCell>
              </HeadRow>
              {rowsData.map((r, i) => (
                <DataRow key={r[0]} $alt={i % 2 === 1}>
                  <NameCell>{r[0]}</NameCell>
                  <Num>{r[1]}</Num>
                  <Num>{r[2]}</Num>
                  <Num>${r[3]}</Num>
                  <Num>${r[4]}</Num>
                </DataRow>
              ))}
              <TotalRow>
                <NameCell>Total</NameCell>
                <Num>19,663</Num>
                <Num>222,597</Num>
                <Num>$11,906,89<br />0</Num>
                <Num>$53.49</Num>
              </TotalRow>
            </TableBody>
            <ScrollCol>
              <ChevronUp size={8} strokeWidth={1.2} />
              <Thumb />
              <ScrollRest />
              <ChevronDown size={8} strokeWidth={1.2} />
            </ScrollCol>
          </TableCell>

          <Visual>
            <VisualTitle $h={18} $pt={4.5} $pl={4}>ClaimCnt by Year and Quarter</VisualTitle>
            <QuarterChart
              vx={27} vy={418} vw={270} vh={199}
              base={560.3} barX={82.7} step={17.05} barW={13.3}
              tops={[250, 134, 120, 118, 132, 132, 138, 143, 172, 216, 290, 372].map(z3)} color="#4b8a90"
              ticks={[['25K', 427], ['20K', 453.7], ['15K', 480.3], ['10K', 507], ['5K', 533.7], ['0K', 560.3]]} tickX={69} gridFrom={73} gridTo={290}
              axisY={['ClaimCnt', 41, 494, 9.6]} axisX={['ClaimStartDate Quarter', 183, 610, 10]} labelSize={9.2}
            />
          </Visual>

          <Visual>
            <VisualTitle $h={18} $pt={4.5} $pl={2}>PaidAmt by Year</VisualTitle>
            <ChartSvg width={263} height={199} viewBox="297 418 263 199">
              {([['$5M', 427], ['$4M', 458.7], ['$3M', 490.3], ['$2M', 522], ['$1M', 553.7], ['$0M', 585.7]] as [string, number][]).map(([t, y]) => (
                <g key={t}>
                  <line x1={335} x2={555} y1={y} y2={y} stroke="#d5d5d5" strokeDasharray="1 4" />
                  <Tick x={330} y={y + 3} textAnchor="end">{t}</Tick>
                </g>
              ))}
              {[[361, 451, '2008'], [422, 438, '2009'], [483.3, 490.3, '2010']].map(([x, t, l]) => (
                <g key={l as string}>
                  <rect x={x as number} y={t as number} width={46.3} height={585.7 - (t as number)} fill="#c2aa78" />
                  <Tick x={(x as number) + 23.2} y={597} textAnchor="middle" $s={9.2}>{l}</Tick>
                </g>
              ))}
              <Tick x={308} y={506} $s={9.6} $c="#444" textAnchor="middle" transform="rotate(-90 308 506)">PaidAmt</Tick>
              <Tick x={446.5} y={610} $s={10} $c="#444" textAnchor="middle">Year</Tick>
            </ChartSvg>
          </Visual>

          <BottomLine />

          <Calendar>
            <CalHead>
              December 2009
              <CalNav>
                <ChevronUp size={11} strokeWidth={1} />
                <ChevronDown size={11} strokeWidth={1} />
              </CalNav>
            </CalHead>
            <CalGrid>
              {['Sun', 'Mon', 'Tue', 'Wed', 'Thu', 'Fri', 'Sat'].map(d => <CalDow key={d}>{d}</CalDow>)}
              {calDays.map((d, i) => (
                <CalDay key={i} $dim={i < 2 || i > 32} $sel={i === 32}>{d}</CalDay>
              ))}
            </CalGrid>
          </Calendar>
          <Pointer width="11" height="15" viewBox="0 0 11 15">
            <path d="M1 1v11l3-2.5 2 4.5 2-1-2-4.5h4z" fill="#fff" stroke="#333" strokeWidth=".9" />
          </Pointer>
        </Canvas>

        <TabBar>
          <TabNav>
            <ChevronLeft size={8} />
            <ChevronRight size={8} />
          </TabNav>
          <PageTab $w={62.4} $on>Summary</PageTab>
          <PageTab $w={73.6}>Claim Trends</PageTab>
          <PageTab $w={100}>Decomposition Tree</PageTab>
          <PageTab $w={77.4}>Provider Stats</PageTab>
          <AddTab>+</AddTab>
        </TabBar>
      </Center>

      <FiltersPane>
        <FilterHead>
          <Filter size={12} strokeWidth={1.1} />
          Filters
          <HeadEnd>
            <Eye size={10} strokeWidth={1.1} />
            <ChevronRight size={11} strokeWidth={1.2} />
          </HeadEnd>
        </FilterHead>
        <SearchBox $w={119}><Search size={10} strokeWidth={1.2} style={{ transform: 'scaleX(-1)' }} />Search</SearchBox>
        <PaneLine />
        <SectionHead $mt={10}><span>Filters on this visual</span><span>...</span></SectionHead>
        {filterCards.map((c, i) => (
          <FilterCard key={c} $mt={i === 0 ? 5 : 4.7}>
            <span>{c}</span>
            <span>is (All)</span>
          </FilterCard>
        ))}
        <AddCard $h={30}>Add data fields here</AddCard>
        <SectionHead $mt={17}><span>Filters on this page</span><span>...</span></SectionHead>
        <AddCard $h={30.7} $mt={5}>Add data fields here</AddCard>
        <SectionHead $mt={17}><span>Filters on all pages</span><span>...</span></SectionHead>
        <FilterCard $fill $h={32.7} $mt={4.3}>
          <b>ICD Short Desc</b>
          <span>is not (Blank)</span>
        </FilterCard>
        <AddCard $h={30.7} $mt={4}>Add data fields here</AddCard>
      </FiltersPane>

      <VizPane>
        <PaneHead $pl={8}>Visualizations<ChevronRight size={11} strokeWidth={1.2} /></PaneHead>
        <VizGrid>
          {vizIcons.map((icon, i) =>
            i === 25 ? (
              <svg key={i} width="15" height="15" viewBox="0 0 15 15"><rect x=".7" y=".7" width="13.6" height="13.6" fill="#fff" stroke="#444" strokeWidth="1.2" /><path d="M2 2h11v11H2zM2 5h11M2 9h11M5.7 2v11M9.3 2v11" fill="none" stroke="#7a8a98" strokeWidth=".7" /><rect x="2" y="2" width="11" height="3" fill="#9bb0c3" /></svg>
            ) : (
              <svg key={i} width="12" height="12" viewBox="0 0 12 12" overflow="visible">{icon}</svg>
            ),
          )}
        </VizGrid>
        <VizTabs>
          <VizTab $on>
            <svg width="15" height="13" viewBox="0 0 15 13" fill="#fff" stroke="#666" strokeWidth=".6" strokeDasharray="1 .6"><rect x=".5" y=".5" width="14" height="12" /><path d="M.5 4h14M.5 7h14M.5 10h14M5 .5v12M10 .5v12" /></svg>
          </VizTab>
          <VizTab>
            <svg width="14" height="16" viewBox="0 0 14 16" fill="none" stroke="#666" strokeWidth=".8"><rect x="1" y="1" width="11" height="4" /><path d="M12 3h1.5v4H7v2" /><rect x="6" y="9" width="2.4" height="6" /></svg>
          </VizTab>
          <VizTab>
            <svg width="15" height="15" viewBox="0 0 15 15" fill="none" stroke="#666" strokeWidth=".8"><circle cx="6.5" cy="6.5" r="5.5" /><path d="M4 9V6M6.5 10V4M9 9V5M11 11l3 3" /></svg>
          </VizTab>
        </VizTabs>
        <FieldLabel $mt={4} $pl={8}>Values</FieldLabel>
        <WellBox>
          {wells.map(w => (
            <Pill key={w}>
              <span>{w}</span>
              <ChevronDown size={10} strokeWidth={1} />
              <X size={9} strokeWidth={1} />
            </Pill>
          ))}
        </WellBox>
        <DrillTitle>Drill through</DrillTitle>
        <FieldLabel $mt={9}>Cross-report</FieldLabel>
        <ToggleRow $mt={7}>
          Off
          <svg width="22" height="8" viewBox="0 0 22 8" fill="none" stroke="#555"><circle cx="4" cy="4" r="3" fill="#fff" /><path d="M7 4h13" /></svg>
        </ToggleRow>
        <FieldLabel $mt={11}>Keep all filters</FieldLabel>
        <ToggleRow $mt={8}>
          On
          <svg width="24" height="8" viewBox="0 0 24 8" stroke="#666" fill="#555"><path d="M1 4h15" /><circle cx="18" cy="4" r="3.4" stroke="none" /></svg>
        </ToggleRow>
        <DrillBox>Add drill-through fields here</DrillBox>
      </VizPane>

      <FieldsPane>
        <PaneHead $pl={8}>Fields<ChevronRight size={11} strokeWidth={1.2} /></PaneHead>
        <FieldsTop>
          <SearchBox $w={114}><Search size={10} strokeWidth={1.2} style={{ transform: 'scaleX(-1)' }} />Search</SearchBox>
        </FieldsTop>
        <TreeRow $mt={7}><ChevronDown size={9} strokeWidth={1} /><span style={{ width: 4 }} /><TableGlyph /><span style={{ width: 7 }} />DE1_0_2008_to_2...<Badge /></TreeRow>
        <TreeRow $mt={6}><ChevronDown size={9} strokeWidth={1} /><span style={{ width: 4 }} /><TableGlyph /><span style={{ width: 7 }} />Sheet1<Badge /></TreeRow>
      </FieldsPane>
    </Main>
    <StatusBar>PAGE 1 OF 4</StatusBar>
  </Shell>
);

export default App;
